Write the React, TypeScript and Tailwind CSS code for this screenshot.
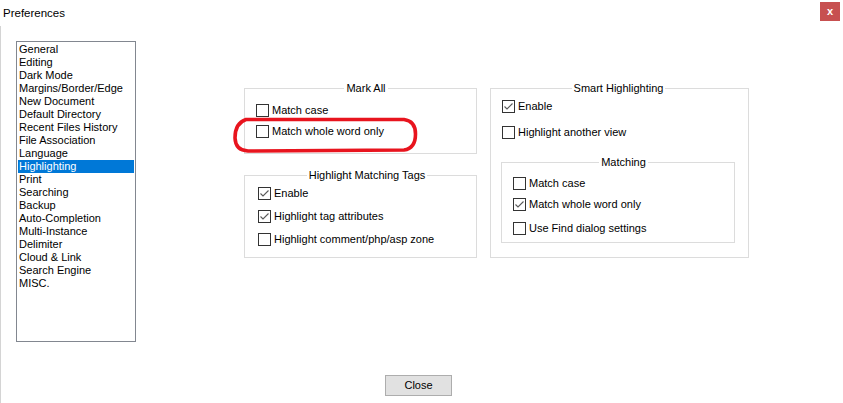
import React from 'react';

const PAGES = [
  'General',
  'Editing',
  'Dark Mode',
  'Margins/Border/Edge',
  'New Document',
  'Default Directory',
  'Recent Files History',
  'File Association',
  'Language',
  'Highlighting',
  'Print',
  'Searching',
  'Backup',
  'Auto-Completion',
  'Multi-Instance',
  'Delimiter',
  'Cloud & Link',
  'Search Engine',
  'MISC.',
];

function Check({ label, checked = false }: { label: string; checked?: boolean }) {
  return (
    <div className="flex items-center h-[13px] gap-[3px]">
      <span className="w-[13px] h-[13px] shrink-0 border border-[#333333] bg-white flex items-center justify-center">
        {checked && (
          <svg width="11" height="11" viewBox="0 0 11 11" fill="none">
            <path d="M1.5 5.5 L4 8 L9.5 2.5" stroke="#5a5a5a" strokeWidth="1.1" />
          </svg>
        )}
      </span>
      <span className="leading-[13px] whitespace-nowrap">{label}</span>
    </div>
  );
}

function Group({
  title,
  className,
  children,
}: {
  title: string;
  className?: string;
  children: React.ReactNode;
}) {
  return (
    <fieldset className={`border border-[#dcdcdc] ${className ?? ''}`}>
      <legend className="mx-auto px-[2px] leading-[13px]">{title}</legend>
      {children}
    </fieldset>
  );
}

export default function App() {
  const selected = 'Highlighting';

  return (
    <div
      className="relative w-[843px] h-[403px] bg-white text-[11px] leading-[13px] text-black flex flex-col overflow-hidden"
      style={{ fontFamily: '"Liberation Sans", Arial, sans-serif' }}
    >
      {/* title bar */}
      <div className="h-[26px] flex items-start shrink-0">
        <span className="ml-[3px] mt-[6px] text-[11.5px] leading-[14px]">Preferences</span>
        <button className="ml-auto mr-[3px] mt-[2px] w-[20px] h-[19px] bg-[#c75050] text-white text-[11px] font-bold leading-none flex items-center justify-center">
          x
        </button>
      </div>

      {/* body */}
      <div className="flex-1 border-l border-[#d4d4d4] flex flex-col">
        <div className="flex items-start">
          {/* page list */}
          <div className="ml-[15px] mt-[15px] w-[120px] h-[301px] border border-[#828790] pt-[1px] px-[1px]">
            {PAGES.map((p) => (
              <div
                key={p}
                className={`h-[13px] pl-[1px] leading-[13px] whitespace-nowrap ${
                  p === selected ? 'bg-[#0078d7] text-white' : ''
                }`}
              >
                {p}
              </div>
            ))}
          </div>

          {/* left column */}
          <div className="ml-[108px] mt-[56px] w-[233px] flex flex-col">
            <Group title="Mark All" className="pl-[11px] pt-[9px] pb-[15px]">
              <div className="flex flex-col gap-[8px]">
                <Check label="Match case" />
                <Check label="Match whole word only" />
              </div>
            </Group>
            <Group title="Highlight Matching Tags" className="mt-[15px] pl-[13px] pt-[5px] pb-[11px]">
              <div className="flex flex-col gap-[10px]">
                <Check label="Enable" checked />
                <Check label="Highlight tag attributes" checked />
                <Check label="Highlight comment/php/asp zone" />
              </div>
            </Group>
          </div>

          {/* right column */}
          <div className="ml-[13px] mt-[56px] w-[259px]">
            <Group title="Smart Highlighting" className="pl-[11px] pr-[13px] pt-[5px] pb-[14px]">
              <div className="flex flex-col gap-[13px]">
                <Check label="Enable" checked />
                <Check label="Highlight another view" />
              </div>
              <Group title="Matching" className="mt-[17px] -ml-[1px] pl-[11px] pt-[8px] pb-[7px]">
                <div className="flex flex-col">
                  <Check label="Match case" />
                  <div className="mt-[8px]">
                    <Check label="Match whole word only" checked />
                  </div>
                  <div className="mt-[11px]">
                    <Check label="Use Find dialog settings" />
                  </div>
                </div>
              </Group>
            </Group>
          </div>
        </div>

        {/* footer */}
        <div className="mt-[33px]">
          <button className="ml-[384px] w-[67px] h-[21px] bg-[#e1e1e1] border border-[#adadad] leading-[19px]">
            Close
          </button>
        </div>
      </div>

      {/* red annotation around "Match whole word only" */}
      <svg
        className="absolute left-0 top-0 pointer-events-none"
        width="843"
        height="403"
        viewBox="0 0 843 403"
        fill="none"
      >
        <path
          d="M246 119.5 L404 119.5 Q415.5 121 415.5 134 Q415.5 148.5 404 150 L248 151 Q235.5 150.5 235 138 Q235 123 246 119.5 Z"
          stroke="#e8141e"
          strokeWidth="3.6"
        />
      </svg>
    </div>
  );
}
